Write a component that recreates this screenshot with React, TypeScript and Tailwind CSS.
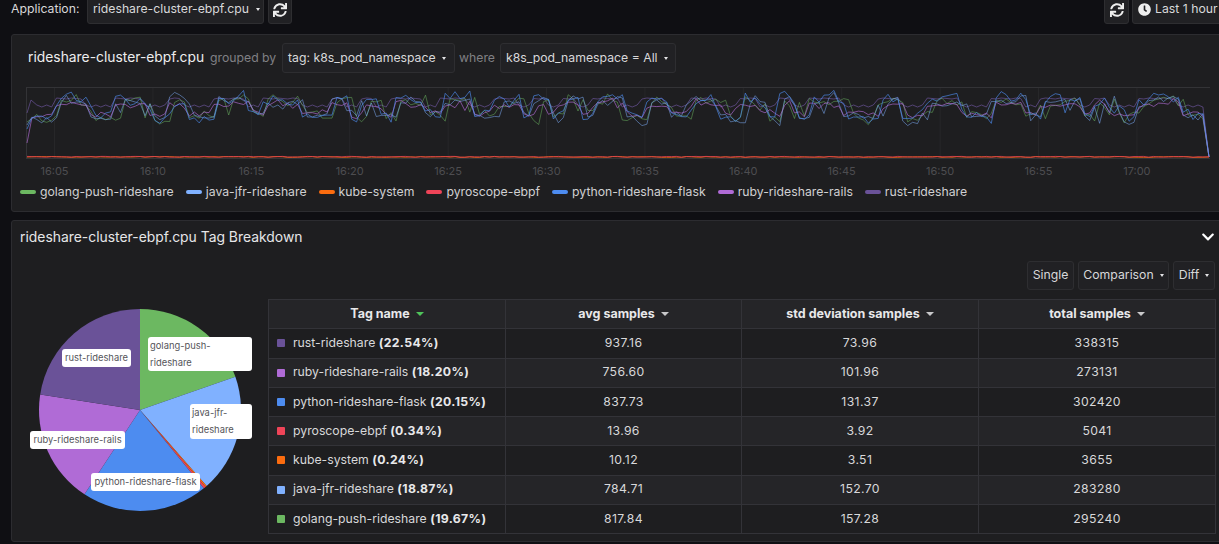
import React from "react";
import { FaSync, FaClock, FaChevronDown } from "react-icons/fa";

const C = {
  golang: "#6cb861",
  java: "#80b1ff",
  kube: "#fb6c0f",
  pyro: "#ef4458",
  python: "#4d8cf0",
  ruby: "#b06bd6",
  rust: "#6a5298",
};

function rng(seed: number) {
  return () => {
    seed |= 0;
    seed = (seed + 0x6d2b79f5) | 0;
    let t = Math.imul(seed ^ (seed >>> 15), 1 | seed);
    t = (t + Math.imul(t ^ (t >>> 7), 61 | t)) ^ t;
    return ((t ^ (t >>> 14)) >>> 0) / 4294967296;
  };
}

const W = 1184;
const STEP = 4.92;
const N = Math.floor(W / STEP);

const shared = (() => {
  const r = rng(17);
  const a: number[] = [];
  let hi = true;
  let hold = 0;
  for (let i = 0; i < N; i++) {
    if (hold <= 0) {
      hi = !hi;
      hold = hi ? 3 + Math.floor(r() * 6) : 3 + Math.floor(r() * 5);
    }
    hold--;
    a.push(hi ? 0.68 + r() * 0.32 : 0.05 + r() * 0.3);
  }
  return a;
})();

function series(seed: number, top: number, bottom: number, noise: number, startY: number, lag: number) {
  const r = rng(seed);
  const pts: string[] = [];
  let prev = (top + bottom) / 2;
  for (let i = 0; i < N; i++) {
    const k = Math.max(0, i - Math.floor(r() * (lag + 1)));
    let target = bottom - shared[k] * (bottom - top) + (r() - 0.5) * noise;
    if (r() < 0.1) target += (r() - 0.5) * noise * 2.6;
    target = Math.max(top - 4, Math.min(bottom + 3, target));
    prev = prev * 0.08 + target * 0.92;
    const y = i === 0 ? startY : prev;
    pts.push(`${(i * STEP + 1).toFixed(1)},${y.toFixed(1)}`);
  }
  pts.push(`${W - 1},70`);
  return pts.join(" ");
}

function flat(seed: number, y: number) {
  const r = rng(seed);
  const pts: string[] = [];
  for (let i = 0; i < N; i++) pts.push(`${(i * STEP + 1).toFixed(1)},${(y + (r() - 0.5) * 0.9).toFixed(1)}`);
  pts.push(`${W - 1},${y}`);
  return pts.join(" ");
}

function rustLine() {
  const pts: string[] = ["1,26", "5,13"];
  for (let i = 2; i < N; i++) {
    const s = shared[i];
    const y = s < 0.35 ? 18 + (i % 2) * 2 : 11 + (i % 3) * 0.5;
    pts.push(`${(i * STEP + 1).toFixed(1)},${y}`);
  }
  pts.push(`${W - 1},70`);
  return pts.join(" ");
}

const ticks = ["16:05", "16:10", "16:15", "16:20", "16:25", "16:30", "16:35", "16:40", "16:45", "16:50", "16:55", "17:00"];

function Chart() {
  return (
    <div className="ml-[14px] w-[1184px]">
      <svg width="1184" height="72" className="block">
        <rect x="0.5" y="0.5" width="1184" height="71" fill="none" stroke="#333336" />
        {ticks.map((_, i) => (
          <line key={i} x1={28.5 + i * 98.4} x2={28.5 + i * 98.4} y1="1" y2="71" stroke="#272729" />
        ))}
        <g fill="none" strokeWidth="1" strokeLinejoin="round">
          <polyline points={rustLine()} stroke={C.rust} opacity="0.7" />
          <polyline points={series(3, 10, 35, 8, 35, 2)} stroke={C.golang} opacity="0.5" />
          <polyline points={series(5, 9, 36, 8, 38, 2)} stroke={C.java} opacity="0.5" />
          <polyline points={series(11, 15, 31, 5, 56, 1)} stroke={C.ruby} opacity="0.65" />
          <polyline points={series(7, 7, 34, 9, 42, 1)} stroke={C.python} opacity="0.65" />
          <polyline points={flat(13, 70)} stroke={C.kube} opacity="0.75" />
          <polyline points={flat(19, 69.8)} stroke={C.pyro} opacity="0.75" />
        </g>
      </svg>
      <div className="relative h-[25px]">
        {ticks.map((t, i) => (
          <span
            key={t}
            className="absolute top-[4px] w-[40px] -translate-x-1/2 text-center text-[11px] leading-[16px] text-[#4d4d50]"
            style={{ left: 28.5 + i * 98.4 }}
          >
            {t}
          </span>
        ))}
      </div>
    </div>
  );
}

function Caret({ className = "" }: { className?: string }) {
  return <span className={`inline-block h-0 w-0 shrink-0 border-x-[2.5px] border-t-[3.5px] border-x-transparent border-t-[#e4e4e6] ${className}`} />;
}

function HeadCaret({ green }: { green?: boolean }) {
  return (
    <span
      className={`ml-[6px] inline-block h-0 w-0 border-x-[4px] border-t-[4px] border-x-transparent align-middle ${
        green ? "border-t-[#4fc45a]" : "border-t-[#c8c8ca]"
      }`}
    />
  );
}

const legend = [
  ["golang-push-rideshare", C.golang],
  ["java-jfr-rideshare", C.java],
  ["kube-system", C.kube],
  ["pyroscope-ebpf", C.pyro],
  ["python-rideshare-flask", C.python],
  ["ruby-rideshare-rails", C.ruby],
  ["rust-rideshare", C.rust],
];

const slices: [number, string][] = [
  [19.67, C.golang],
  [18.87, C.java],
  [0.24, C.kube],
  [0.34, C.pyro],
  [20.15, C.python],
  [18.2, C.ruby],
  [22.54, C.rust],
];

function Pie() {
  const r = 101;
  const cx = 128;
  const cy = 101;
  let acc = 0;
  const total = slices.reduce((s, x) => s + x[0], 0);
  return (
    <svg width="256" height="204" className="absolute left-0 top-0">
      {slices.map(([v, c]) => {
        const a0 = (acc / total) * Math.PI * 2;
        acc += v;
        const a1 = (acc / total) * Math.PI * 2;
        const x0 = cx + r * Math.sin(a0);
        const y0 = cy - r * Math.cos(a0);
        const x1 = cx + r * Math.sin(a1);
        const y1 = cy - r * Math.cos(a1);
        const large = a1 - a0 > Math.PI ? 1 : 0;
        return <path key={c} d={`M${cx},${cy} L${x0},${y0} A${r},${r} 0 ${large} 1 ${x1},${y1} Z`} fill={c} />;
      })}
    </svg>
  );
}

function PieLabel({ className, children }: { className: string; children: React.ReactNode }) {
  return (
    <div className={`absolute whitespace-nowrap rounded-[3px] bg-white px-[2px] text-[9.4px] leading-[17px] text-[#55555a] ${className}`}>
      {children}
    </div>
  );
}

const rows: [string, string, string, string, string, string][] = [
  ["rust-rideshare", "(22.54%)", "937.16", "73.96", "338315", C.rust],
  ["ruby-rideshare-rails", "(18.20%)", "756.60", "101.96", "273131", C.ruby],
  ["python-rideshare-flask", "(20.15%)", "837.73", "131.37", "302420", C.python],
  ["pyroscope-ebpf", "(0.34%)", "13.96", "3.92", "5041", C.pyro],
  ["kube-system", "(0.24%)", "10.12", "3.51", "3655", C.kube],
  ["java-jfr-rideshare", "(18.87%)", "784.71", "152.70", "283280", C.java],
  ["golang-push-rideshare", "(19.67%)", "817.84", "157.28", "295240", C.golang],
];

const btn = "flex items-center whitespace-nowrap rounded-[3px] border border-[#2e2e31] bg-[#212124] text-[#d8d8da]";
const cell = "border border-[#333338] p-0";
const head = `${cell} text-[12.5px] font-bold text-[#e8e8ea]`;
const num = `${cell} text-center tracking-[0.35px]`;

export default function App() {
  return (
    <div className="h-[544px] w-full overflow-hidden bg-[#0f0f13]" style={{ fontFamily: "Inter, 'Noto Sans', sans-serif" }}>
      <div className="-mt-[5px] w-[1231px]">
        <div className="flex h-[29px] items-center pl-[11px] pr-[1px] text-[12.25px]">
          <span className="mr-[8px] w-[68px] whitespace-nowrap text-[#d8d8da]">Application:</span>
          <div className={`${btn} h-[29px] w-[177px] pl-[5px]`}>
            <span>rideshare-cluster-ebpf.cpu</span>
            <Caret className="ml-[7px]" />
          </div>
          <div className={`${btn} ml-[4px] h-[29px] w-[24px] justify-center`}>
            <FaSync className="text-[14px] text-[#eeeeee]" />
          </div>
          <div className="flex-1" />
          <div className={`${btn} h-[29px] w-[25px] justify-center`}>
            <FaSync className="text-[14px] text-[#eeeeee]" />
          </div>
          <div className={`${btn} ml-[3px] h-[29px] w-[98px] pl-[5px]`}>
            <FaClock className="mr-[4px] text-[13px] text-[#eeeeee]" />
            <span>Last 1 hour</span>
          </div>
        </div>

        <div className="ml-[11px] mt-[10px] h-[178px] rounded-[3px] border border-[#2c2c30] bg-[#1e1e20]">
          <div className="ml-[16px] mt-[8px] flex h-[30px] items-center text-[12.25px]">
            <span className="mb-[1px] w-[177px] whitespace-nowrap text-[13.85px] text-[#ededee]">rideshare-cluster-ebpf.cpu</span>
            <span className="ml-[5px] w-[67px] whitespace-nowrap text-[#808084]">grouped by</span>
            <div className={`${btn} ml-[5px] h-[30px] w-[173px] pl-[5px]`}>
              <span>tag: k8s_pod_namespace</span>
              <Caret className="ml-[6px]" />
            </div>
            <span className="ml-[4px] w-[36px] text-[#808084]">where</span>
            <div className={`${btn} ml-[5px] h-[30px] w-[176px] pl-[5px]`}>
              <span>k8s_pod_namespace = All</span>
              <Caret className="ml-[6px]" />
            </div>
          </div>
          <div className="mt-[14px]">
            <Chart />
          </div>
          <div className="ml-[8px] flex h-[16px] items-center gap-[12px] whitespace-nowrap text-[12.25px] text-[#d0d0d2]">
            {legend.map(([n, c]) => (
              <div key={n} className="flex items-center">
                <span className="mr-[4px] h-[4px] w-[16px] rounded-[2px]" style={{ background: c }} />
                <span>{n}</span>
              </div>
            ))}
          </div>
        </div>

        <div className="ml-[11px] mt-[8px] h-[322px] rounded-[3px] border border-[#2c2c30] bg-[#1e1e20]">
          <div className="flex h-[32px] items-center pl-[8px] pr-[15px]">
            <span className="text-[13.9px] text-[#e6e6e8]">rideshare-cluster-ebpf.cpu Tag Breakdown</span>
            <div className="flex-1" />
            <FaChevronDown className="text-[14px] text-white" />
          </div>
          <div className="mr-[4px] mt-[8px] flex h-[29px] justify-end gap-[4px] pr-[11px] text-[12.25px]">
            <div className={`${btn} w-[47px] justify-center`}>Single</div>
            <div className={`${btn} w-[91px] justify-center`}>
              Comparison
              <Caret className="ml-[6px]" />
            </div>
            <div className={`${btn} w-[42px] justify-center`}>
              Diff
              <Caret className="ml-[6px]" />
            </div>
          </div>
          <div className="mt-[9px] flex">
            <div className="relative w-[256px] shrink-0">
              <div className="relative mt-[10px] h-[204px]">
                <Pie />
                <PieLabel className="left-[50px] top-[40px] h-[18px] w-[69px] text-center">rust-rideshare</PieLabel>
                <PieLabel className="left-[136px] top-[28px] h-[34px] w-[104px]">
                  golang-push-
                  <br />
                  rideshare
                </PieLabel>
                <PieLabel className="left-[178px] top-[95px] h-[35px] w-[62px]">
                  java-jfr-
                  <br />
                  rideshare
                </PieLabel>
                <PieLabel className="left-[18px] top-[122px] h-[18px] w-[95px] text-center">ruby-rideshare-rails</PieLabel>
                <PieLabel className="left-[79px] top-[164px] h-[18px] w-[109px] text-center">python-rideshare-flask</PieLabel>
              </div>
            </div>
            <table className="w-[947px] table-fixed border-collapse text-[12.25px] text-[#d8d8da]">
              <thead>
                <tr className="h-[29.25px] bg-[#252528]">
                  <th className={`${head} w-[237px]`}>
                    Tag name
                    <HeadCaret green />
                  </th>
                  <th className={`${head} w-[236px]`}>
                    avg samples
                    <HeadCaret />
                  </th>
                  <th className={`${head} w-[237px]`}>
                    std deviation samples
                    <HeadCaret />
                  </th>
                  <th className={`${head} w-[237px]`}>
                    total samples
                    <HeadCaret />
                  </th>
                </tr>
              </thead>
              <tbody>
                {rows.map((r, i) => (
                  <tr key={r[0]} className={`h-[29.25px] ${i % 2 === 1 ? "bg-[#252528]" : "bg-[#1e1e20]"}`}>
                    <td className={cell}>
                      <div className="flex items-center pl-[8px]">
                        <span className="mr-[8px] h-[8px] w-[8px] rounded-[1px]" style={{ background: r[5] }} />
                        <span>
                          {r[0]} <b className="font-bold tracking-[0.35px] text-[#e8e8ea]">{r[1]}</b>
                        </span>
                      </div>
                    </td>
                    <td className={num}>{r[2]}</td>
                    <td className={num}>{r[3]}</td>
                    <td className={num}>{r[4]}</td>
                  </tr>
                ))}
              </tbody>
            </table>
          </div>
        </div>
      </div>
    </div>
  );
}
